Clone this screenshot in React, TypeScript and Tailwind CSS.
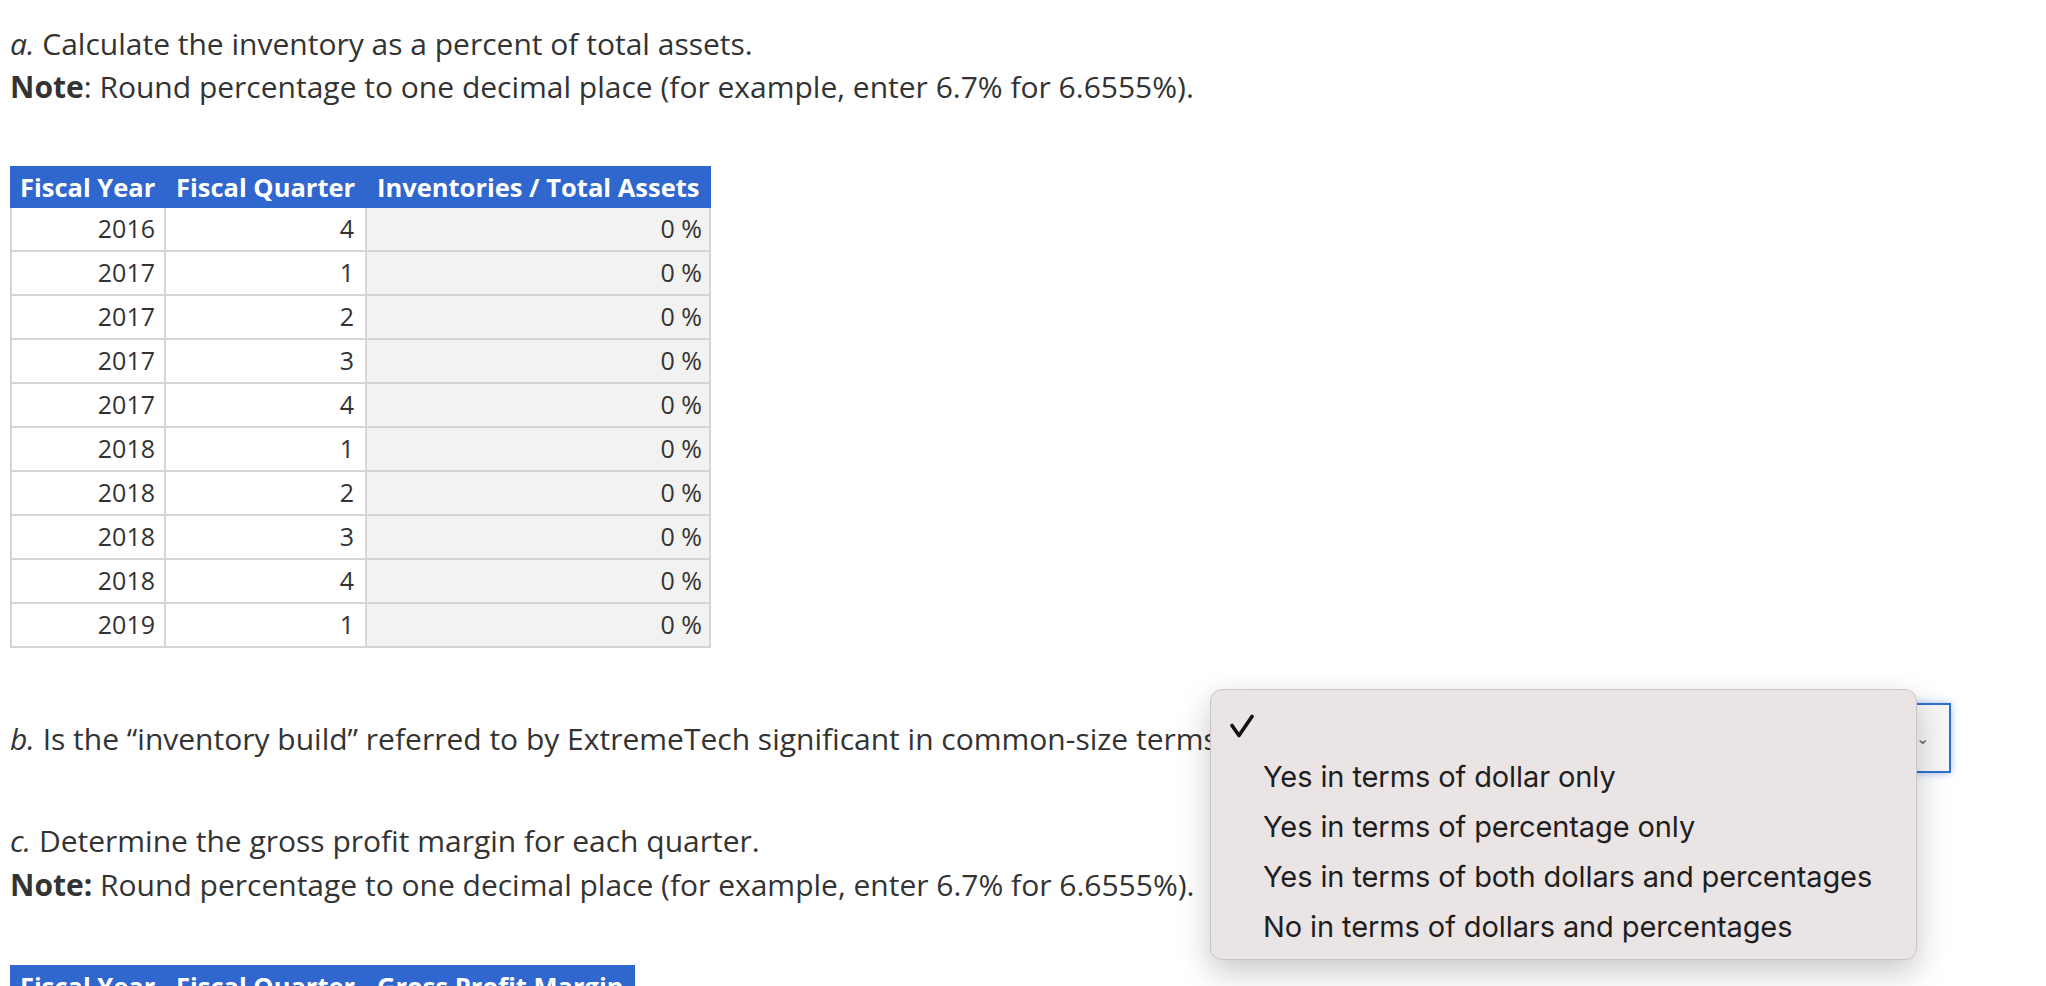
import React from "react";

const rows: [string, string][] = [
  ["2016", "4"],
  ["2017", "1"],
  ["2017", "2"],
  ["2017", "3"],
  ["2017", "4"],
  ["2018", "1"],
  ["2018", "2"],
  ["2018", "3"],
  ["2018", "4"],
  ["2019", "1"],
];

function DataTable({ third, widths }: { third: string; widths: string }) {
  return (
    <div className="inline-block">
      <div className={`grid ${widths} h-[42px] bg-[#2f67cf] text-white font-bold text-[25.5px] items-center`}>
        <div className="pl-[10px] text-left whitespace-nowrap">Fiscal Year</div>
        <div className="pl-[10px] text-left whitespace-nowrap">Fiscal Quarter</div>
        <div className="pl-[10px] text-left whitespace-nowrap">{third}</div>
      </div>
      {rows.map((r, i) => (
        <div key={i} className={`grid ${widths} h-[44px] text-[25px] text-[#333]`}>
          <div className="border-l-2 border-r-2 border-b-2 border-[#d5d5d5] flex items-center justify-end pr-[9px]">{r[0]}</div>
          <div className="border-r-2 border-b-2 border-[#d5d5d5] flex items-center justify-end pr-[11px]">{r[1]}</div>
          <div className="border-r-2 border-b-2 border-[#d5d5d5] bg-[#f2f2f2] flex items-center justify-end pr-[7px]">0 %</div>
        </div>
      ))}
    </div>
  );
}

const options = [
  "Yes in terms of dollar only",
  "Yes in terms of percentage only",
  "Yes in terms of both dollars and percentages",
  "No in terms of dollars and percentages",
];

export default function App() {
  return (
    <div
      className="relative min-h-[986px] bg-white text-[#333] pl-[10px] pt-[22px] pb-[40px] overflow-hidden"
      style={{ fontFamily: '"Open Sans", "Noto Sans", sans-serif' }}
    >
      <div className="text-[30px] leading-[43px]">
        <p>
          <i>a.</i> Calculate the inventory as a percent of total assets.
        </p>
        <p>
          <b>Note</b>: Round percentage to one decimal place (for example, enter 6.7% for 6.6555%).
        </p>
      </div>

      <div className="mt-[58px]">
        <DataTable third="Inventories / Total Assets" widths="grid-cols-[156px_201px_344px]" />
      </div>

      <div className="mt-[55px] flex items-center justify-between w-[1934px] h-[70px] text-[30px]">
        <p className="whitespace-nowrap">
          <i>b.</i> Is the “inventory build” referred to by ExtremeTech significant in common-size terms?
        </p>
        <div className="w-[720px] shrink-0 h-[70px] border-2 border-[#2f6fd2] bg-[#f6f6f6] shadow-[0_0_8px_rgba(47,111,210,0.45)] flex items-center justify-end pr-[20px]">
          <span className="text-[#666] text-[16px]">⌄</span>
        </div>
      </div>

      <div className="mt-[46px] text-[30px] leading-[44px]">
        <p>
          <i>c.</i> Determine the gross profit margin for each quarter.
        </p>
        <p>
          <b>Note:</b> Round percentage to one decimal place (for example, enter 6.7% for 6.6555%).
        </p>
      </div>

      <div className="mt-[58px]">
        <DataTable third="Gross Profit Margin" widths="grid-cols-[156px_201px_268px]" />
      </div>

      <div
        className="absolute left-[1210px] top-[689px] w-[707px] h-[271px] rounded-[12px] bg-[#ebe4e5] border border-[#c9c5c6] shadow-[0_12px_32px_rgba(0,0,0,0.22)] pt-[10px] text-[#1e1e1e]"
        style={{ fontFamily: 'Inter, "Liberation Sans", sans-serif' }}
      >
        <div className="h-[52px] flex items-center pl-[19px]">
          <svg width="24" height="24" viewBox="0 0 24 24" className="block">
            <path d="M2 11.5 L9 21.5 L22 2.5" fill="none" stroke="#111" strokeWidth="3.6" strokeLinecap="round" strokeLinejoin="round" />
          </svg>
        </div>
        {options.map((o) => (
          <div key={o} className="h-[50px] flex items-center pl-[52px] text-[29px] tracking-[-0.1px]">
            {o}
          </div>
        ))}
      </div>
    </div>
  );
}
